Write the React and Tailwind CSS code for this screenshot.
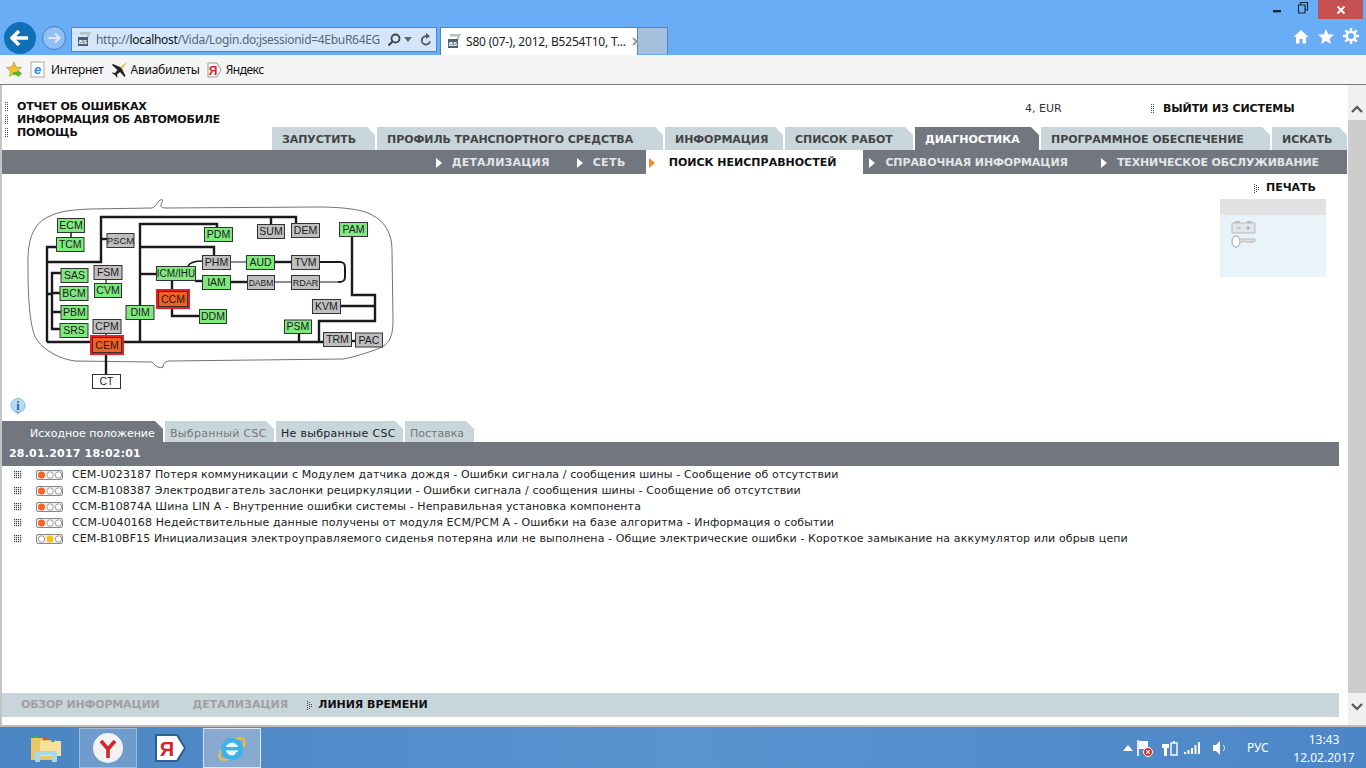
import React from 'react';

const VERD = 'font-["DejaVu_Sans",sans-serif]';
const SEGOE = 'font-["Noto_Sans",sans-serif]';
const NOTCH = '[clip-path:polygon(0_0,calc(100%-8px)_0,100%_8px,100%_100%,0_100%)]';

function Dots({ className = '' }) {
  return (
    <svg width="4" height="9" viewBox="0 0 4 9" className={className} fill="#555">
      {[0, 2, 4, 6, 8].map((y) => (
        <g key={y}><rect x="0" y={y} width="1" height="1" /><rect x="2" y={y} width="1" height="1" /></g>
      ))}
    </svg>
  );
}

function Grid() {
  const pts = [0, 2, 4, 6];
  return (
    <svg width="8" height="8" viewBox="0 0 8 8" fill="#444" className="shrink-0">
      {pts.map((y) => pts.map((x) => <rect key={x + '-' + y} x={x} y={y} width="1.2" height="1.2" />))}
    </svg>
  );
}

function Arrow({ color = '#fff' }) {
  return <svg width="6" height="10" viewBox="0 0 6 10" className="shrink-0"><path d="M0 0L6 5L0 10Z" fill={color} /></svg>;
}

function DotArrow() {
  return (
    <svg width="6" height="9" viewBox="0 0 6 9" fill="#444" className="shrink-0">
      <rect x="0" y="0" width="1" height="1" /><rect x="0" y="2" width="1" height="1" /><rect x="0" y="4" width="1" height="1" /><rect x="0" y="6" width="1" height="1" /><rect x="0" y="8" width="1" height="1" />
      <rect x="2" y="1" width="1" height="1" /><rect x="2" y="3" width="1" height="1" /><rect x="2" y="5" width="1" height="1" /><rect x="2" y="7" width="1" height="1" />
      <rect x="4" y="3" width="1" height="1" /><rect x="4" y="5" width="1" height="1" />
    </svg>
  );
}

function Lamp({ active, color }) {
  const cx = [5.5, 14, 22.5];
  return (
    <svg width="27" height="10" viewBox="0 0 27 10" className="shrink-0">
      <rect x="0.5" y="0.5" width="26" height="9" rx="1.5" fill="#f0f0f0" stroke="#888" />
      {cx.map((x, i) => (
        <circle key={x} cx={x} cy="5" r="3.2" fill={i === active ? color : '#fff'} stroke={i === active ? color : '#888'} strokeWidth="0.8" />
      ))}
    </svg>
  );
}

function AsIcon() {
  return (
    <svg width="15" height="17" viewBox="0 0 15 17" className="shrink-0">
      <path d="M3 1H14L10 10H8L10.5 3.5H3Z" fill="#b8c0c8" />
      <rect x="1" y="6" width="10" height="9" fill="#4f6272" />
      <text x="6" y="13" textAnchor="middle" fontSize="7.5" fontWeight="700" fill="#fff" fontFamily="Liberation Sans">as</text>
    </svg>
  );
}

function IeLogo({ size = 18 }) {
  return (
    <svg width={size} height={size} viewBox="0 0 32 32" className="shrink-0">
      <ellipse cx="16" cy="17" rx="15" ry="7" fill="none" stroke="#f2c230" strokeWidth="2" transform="rotate(-38 16 17)" />
      <circle cx="16" cy="17" r="11" fill="#3db2ea" />
      <circle cx="16" cy="17" r="6.4" fill="#e8f8ff" />
      <rect x="8" y="15" width="17" height="3.4" fill="#3db2ea" />
      <path d="M20 20h7c-1 4-5 7-10 7-2 0-3-1-4-2 3 1 6-1 7-5z" fill="#3db2ea" />
    </svg>
  );
}

const nodes = [
  ['ECM', 57.5, 218.5, 27, 14, 'g'], ['TCM', 56.5, 237.5, 27.5, 14, 'g'], ['PSCM', 107, 233.5, 27, 14, 'x', 9.5],
  ['SAS', 61, 268.5, 27, 14, 'g'], ['BCM', 60, 286.5, 28, 14, 'g'], ['PBM', 61, 305.5, 27, 14, 'g'], ['SRS', 60, 323.5, 28, 14, 'g'],
  ['FSM', 94, 265.5, 28, 14, 'x'], ['CVM', 94.5, 283.5, 27, 14, 'g'], ['CPM', 93, 319.5, 28, 14, 'x'],
  ['CEM', 92.5, 337.5, 29, 15, 'r'], ['CT', 92.5, 374.5, 28, 14, 'w'], ['DIM', 126, 305.5, 28, 14, 'g'],
  ['ICM/IHU', 156.5, 266.5, 39, 14, 'g', 10], ['CCM', 158.5, 291.5, 29, 15, 'r'], ['PDM', 204.5, 227.5, 28, 14, 'g'],
  ['SUM', 257.5, 224.5, 27, 14, 'x'], ['DEM', 291.5, 223.5, 28, 14, 'x'], ['PAM', 339.5, 222.5, 28, 14, 'g'],
  ['PHM', 202.5, 255.5, 28, 14, 'x'], ['AUD', 246.5, 255.5, 28, 14, 'g'], ['TVM', 291.5, 255.5, 28, 14, 'x'],
  ['IAM', 202.5, 275.5, 28, 14, 'g'], ['DABM', 247.5, 275.5, 27, 14, 'x', 8.5], ['RDAR', 291.5, 275.5, 28, 14, 'x', 9],
  ['KVM', 312.5, 299.5, 28, 14, 'x'], ['DDM', 199.5, 309.5, 27, 14, 'g'], ['PSM', 284.5, 320, 27, 13.5, 'g'],
  ['TRM', 323.5, 332.5, 28, 14, 'x'], ['PAC', 355.5, 333, 27, 14, 'x'],
];
const fills = { g: '#7fe87f', x: '#bfbfbf', r: '#f2601f', w: '#ffffff' };

function Diagram() {
  return (
    <svg width="380" height="200" viewBox="20 195 380 200" className="block shrink-0">
      <path d="M28 268C27 240 33 224 48 217C60 211 70 210 90 209L152 208C157 206 157 203 159 201C161 199 164 199 162 202C160 206 160 208 166 208L317 207C340 207 362 209 372 215C386 222 392 235 392 250L393 320C393 340 388 345 375 350C360 355 350 358 343 359L170 361C165 361 163 364 163 367C160 369 155 366 152 362L75 361C60 359 45 351 37 340C30 330 28 300 28 268Z" fill="#fff" stroke="#333" strokeWidth="0.7" />
      <g stroke="#1a1a1a" strokeWidth="2.4" fill="none">
        <path d="M47 342H324" />
        <path d="M47 342V247H56" />
        <path d="M47 262H101V217H296V224" />
        <path d="M271 217V224" />
        <path d="M101 239H107" />
        <path d="M71 232V238" strokeWidth="1.5" />
        <path d="M61 273H52V329H60" />
        <path d="M52 293H60M52 312H61M47 294H52" />
        <path d="M140 342V224H217V228" />
        <path d="M140 247H214V256" />
        <path d="M140 274H156" />
        <path d="M172 280V291" />
        <path d="M172 306V316H200" />
        <path d="M188 266C190 262 195 261 203 261" strokeWidth="1.6" />
        <path d="M195 281H203" />
        <path d="M274 262H292" />
        <path d="M230 262H247" strokeWidth="1" />
        <path d="M319 262H340C344 262 345 264 345 268V277C345 281 343 282 338 282" strokeWidth="2" />
        <path d="M320 282H338" strokeWidth="1" />
        <path d="M230 282H248" />
        <path d="M274 282H292" strokeWidth="1" />
        <path d="M352 236V295H375V321H319V342" />
        <path d="M340 306H375" />
        <path d="M299 333V342" />
        <path d="M352 341H356" />
        <path d="M106 352V375" />
        <path d="M106 333V338" strokeWidth="1.4" />
        <path d="M106 279V284" strokeWidth="1.2" />
      </g>
      {nodes.map(([t, x, y, w, h, k, fs]) => (
        <g key={t}>
          {k === 'r' && <rect x={x - 1.5} y={y - 1.5} width={w + 3} height={h + 3} fill="none" stroke="#ee1c25" strokeWidth="2" />}
          <rect x={x} y={y} width={w} height={h} fill={fills[k]} stroke="#333" strokeWidth="1" />
          <text x={x + w / 2} y={y + h / 2 + 3.6} textAnchor="middle" fontSize={fs || 10.5} fontFamily="Liberation Sans" fill="#1c1c1c">{t}</text>
        </g>
      ))}
    </svg>
  );
}

const topTabs = [
  ['ЗАПУСТИТЬ', 'w-[103px]'], ['ПРОФИЛЬ ТРАНСПОРТНОГО СРЕДСТВА', 'w-[286px]'], ['ИНФОРМАЦИЯ', 'w-[118px]'],
  ['СПИСОК РАБОТ', 'w-[128px]'], ['ДИАГНОСТИКА', 'w-[124px]', true], ['ПРОГРАММНОЕ ОБЕСПЕЧЕНИЕ', 'w-[229px]'], ['ИСКАТЬ', 'w-[75px]'],
];
const rows = [
  ['CEM-U023187 Потеря коммуникации с Модулем датчика дождя - Ошибки сигнала / сообщения шины - Сообщение об отсутствии', 0, '#f26522'],
  ['CCM-B108387 Электродвигатель заслонки рециркуляции - Ошибки сигнала / сообщения шины - Сообщение об отсутствии', 0, '#f26522'],
  ['CCM-B10874A Шина LIN A - Внутренние ошибки системы - Неправильная установка компонента', 0, '#f26522'],
  ['CCM-U040168 Недействительные данные получены от модуля ECM/PCM A - Ошибки на базе алгоритма - Информация о событии', 0, '#f26522'],
  ['CEM-B10BF15 Инициализация электроуправляемого сиденья потеряна или не выполнена - Общие электрические ошибки - Короткое замыкание на аккумулятор или обрыв цепи', 1, '#f7c600'],
];

function Chrome() {
  return (
    <div className="h-[55px] bg-[#69adf6] shrink-0 flex flex-col">
      <div className="h-[19px] flex justify-end items-start">
        <svg width="10" height="19" viewBox="0 0 10 19" className="mr-[15px]"><rect x="1" y="10" width="8" height="2.4" fill="#1b2a3a" /></svg>
        <svg width="12" height="19" viewBox="0 0 12 19" className="mr-[9px]"><path d="M3.5 5V2.5H10.5V10H8M1.5 5H8V13H1.5Z" fill="none" stroke="#1b2a3a" strokeWidth="1.2" /></svg>
        <div className="w-[45px] h-[19px] bg-[#c75050] flex items-center justify-center mr-[3px]">
          <svg width="10" height="10" viewBox="0 0 10 10"><path d="M1.5 1.5L8.5 8.5M8.5 1.5L1.5 8.5" stroke="#fff" strokeWidth="1.8" /></svg>
        </div>
      </div>
      <div className="flex-1 flex items-start pl-[4px]">
        <div className="w-[32px] h-[32px] mt-[3px] rounded-full bg-[#0f70b7] flex items-center justify-center shrink-0">
          <svg width="20" height="18" viewBox="0 0 20 18"><path d="M9 2L2 9L9 16M2.5 9H18" fill="none" stroke="#fff" strokeWidth="3.4" /></svg>
        </div>
        <div className="w-[24px] h-[24px] mt-[7px] ml-[6px] rounded-full border border-[#3b7fc0] bg-[#8fc1f4] flex items-center justify-center shrink-0">
          <svg width="14" height="12" viewBox="0 0 14 12"><path d="M8 1.5L12.5 6L8 10.5M12 6H1.5" fill="none" stroke="#dfe9f3" strokeWidth="2" /></svg>
        </div>
        <div className="w-[366px] h-[25px] mt-[8px] ml-[5px] bg-[#d3e6fb] border border-[#4a87c9] flex items-center pl-[5px] shrink-0">
          <AsIcon />
          <span className={`ml-[4px] w-[286px] text-[12px] text-[#5a6672] whitespace-nowrap ${SEGOE} tracking-[-0.3px]`}>http://<span className="text-[#111]">localhost</span>/Vida/Login.do;jsessionid=4EbuR64EG</span>
          <svg width="14" height="14" viewBox="0 0 14 14" className="ml-[5px] shrink-0"><circle cx="8.5" cy="5.5" r="4" fill="none" stroke="#444" strokeWidth="1.8" /><path d="M5.5 8.5L1.5 12.5" stroke="#444" strokeWidth="2" /></svg>
          <svg width="8" height="5" viewBox="0 0 8 5" className="ml-[3px] shrink-0"><path d="M0 0H8L4 5Z" fill="#666" /></svg>
          <svg width="12" height="14" viewBox="0 0 12 14" className="ml-[8px] shrink-0"><path d="M10 8.5A4.2 4.2 0 1 1 7 3.2" fill="none" stroke="#555" strokeWidth="1.8" /><path d="M6 0L10 3.2L6 6Z" fill="#555" /></svg>
        </div>
        <div className="w-[198px] h-[28px] mt-[8px] ml-[3px] bg-white border border-b-0 border-[#4a87c9] flex items-center pl-[6px] shrink-0">
          <AsIcon />
          <span className={`ml-[4px] text-[12px] text-[#222] whitespace-nowrap tracking-[-0.2px] ${SEGOE}`}>S80 (07-), 2012, B5254T10, T...</span>
          <svg width="9" height="9" viewBox="0 0 9 9" className="ml-[6px] shrink-0"><path d="M1 1L8 8M8 1L1 8" stroke="#999" strokeWidth="1.8" /></svg>
        </div>
        <div className="w-[30px] h-[27px] mt-[8px] bg-[#a5bfdc] border-t border-r border-[#4a87c9] shrink-0" />
        <div className="ml-auto mt-[9px] flex items-center gap-[9px] pr-[7px]">
          <svg width="16" height="15" viewBox="0 0 16 15"><path d="M8 1L15.5 8H13V14.5H9.5V10H6.5V14.5H3V8H.5Z" fill="#fff" /></svg>
          <svg width="16" height="15" viewBox="0 0 16 15"><path d="M8 0L10.2 5.2L16 5.7L11.6 9.4L13 15L8 12L3 15L4.4 9.4L0 5.7L5.8 5.2Z" fill="#fff" /></svg>
          <svg width="16" height="16" viewBox="0 0 16 16"><circle cx="8" cy="8" r="4.2" fill="none" stroke="#fff" strokeWidth="2.4" /><g stroke="#fff" strokeWidth="2.4"><path d="M8 0V3M8 13V16M0 8H3M13 8H16M2.3 2.3L4.4 4.4M11.6 11.6L13.7 13.7M13.7 2.3L11.6 4.4M4.4 11.6L2.3 13.7" /></g></svg>
        </div>
      </div>
    </div>
  );
}

function Favs() {
  return (
    <div className={`h-[30px] bg-[#f5f5f5] border-b border-[#7a7a7a] shrink-0 flex items-center pl-[6px] text-[12px] text-[#111] ${SEGOE} tracking-[-0.35px]`}>
      <svg width="16" height="16" viewBox="0 0 16 16"><path d="M8 0L10 5L15.5 5.5L11.3 9L12.6 14.5L8 11.5L3.4 14.5L4.7 9L.5 5.5L6 5Z" fill="#f4c430" stroke="#a8841c" strokeWidth=".6" /><path d="M7 10H12V8L16 11.5L12 15V13H7Z" fill="#5cb531" /></svg>
      <span className="ml-[8px]"><svg width="15" height="17" viewBox="0 0 15 17"><rect x="1" y="1" width="13" height="15" fill="#fff" stroke="#aaa" /><text x="7.5" y="13" textAnchor="middle" fontSize="13" fontWeight="700" fontStyle="italic" fill="#2b8de0" fontFamily="Liberation Sans">e</text></svg></span>
      <span className="ml-[6px]">Интернет</span>
      <svg width="16" height="16" viewBox="0 0 16 16" className="ml-[8px]"><path d="M15 1L10 5.5L2 2L1 3L6.5 8L4 11L1.5 10.5L1 11.2L4 13L5.8 15.5L6.5 15L6 12.5L9 10L13.5 15L14.5 14L10.8 6.5Z" fill="#222" /><path d="M15 1L10 5.5L11 6.5Z" fill="#f2c230" stroke="#f2c230" /></svg>
      <span className="ml-[3px] tracking-[-0.22px]">Авиабилеты</span>
      <svg width="15" height="16" viewBox="0 0 15 16" className="ml-[7px]"><path d="M1 1H10L14 8L10 15H1Z" fill="#fff" stroke="#999" /><text x="6" y="12.5" textAnchor="middle" fontSize="12" fontWeight="700" fill="#d8232a" fontFamily="Liberation Sans">Я</text></svg>
      <span className="ml-[4px] tracking-[-0.5px]">Яндекс</span>
    </div>
  );
}

function Scrollbar() {
  return (
    <div className="w-[18px] shrink-0 flex flex-col bg-[#f0f0f0]">
      <div className="h-[35px] flex items-center justify-center pt-[12px]">
        <svg width="12" height="8" viewBox="0 0 12 8"><path d="M1 7L6 2L11 7" fill="none" stroke="#555" strokeWidth="2.2" /></svg>
      </div>
      <div className="flex-1 bg-[#cdcdcd]" />
      <div className="h-[32px] flex items-center justify-center pb-[4px]">
        <svg width="12" height="8" viewBox="0 0 12 8"><path d="M1 1L6 6L11 1" fill="none" stroke="#555" strokeWidth="2.2" /></svg>
      </div>
    </div>
  );
}

export default function App() {
  return (
    <div className="w-[1366px] h-[768px] overflow-hidden flex flex-col bg-white">
      <Chrome />
      <Favs />
      <div className="flex-1 min-h-0 flex">
        <div className={`flex-1 min-w-0 border-l-2 border-[#c4c4c4] bg-white flex flex-col ${VERD}`}>
          <header className="h-[65px] shrink-0 flex text-[11px] font-bold text-[#111]">
            <div className="w-[270px] shrink-0 pt-[15px] pl-[3px] flex flex-col tracking-[-0.2px]">
              {['ОТЧЕТ ОБ ОШИБКАХ', 'ИНФОРМАЦИЯ ОБ АВТОМОБИЛЕ', 'ПОМОЩЬ'].map((t) => (
                <div key={t} className="h-[13px] flex items-center gap-[8px] whitespace-nowrap leading-none"><Dots />{t}</div>
              ))}
            </div>
            <div className="flex-1 flex flex-col justify-between">
              <div className="flex pt-[17px] leading-none">
                <span className="ml-[753px] w-[38px] pt-[1px] font-normal text-[#333] whitespace-nowrap">4, EUR</span>
                <span className="ml-[88px] flex items-center gap-[8px] h-[13px] whitespace-nowrap tracking-[-0.1px]"><Dots />ВЫЙТИ ИЗ СИСТЕМЫ</span>
              </div>
              <div className="h-[23px] flex gap-[2px] tracking-[-0.07px]">
                {topTabs.map(([t, w, on]) => (
                  <div key={t} className={`${w} ${NOTCH} shrink-0 h-[23px] flex items-center pl-[10px] pt-[4px] whitespace-nowrap ${on ? 'bg-[#72767f] text-white' : 'bg-[#c8d6dc] text-[#444]'}`}>{t}</div>
                ))}
              </div>
            </div>
          </header>
          <nav className="h-[24px] mr-[1px] shrink-0 bg-[#72767f] flex justify-end items-stretch pr-[28px] text-[11px] font-bold text-[#e4e6e8] whitespace-nowrap">
            <div className="flex items-center gap-[10px] pt-[2px] tracking-[0.18px]"><Arrow />ДЕТАЛИЗАЦИЯ</div>
            <div className="flex items-center gap-[10px] pt-[2px] ml-[27px] tracking-[0.4px]"><Arrow />СЕТЬ</div>
            <div className="flex items-center gap-[14px] pt-[2px] ml-[20px] bg-white pr-[27px] pl-[3px] text-[#111]"><Arrow color="#f28c28" />ПОИСК НЕИСПРАВНОСТЕЙ</div>
            <div className="flex items-center gap-[10px] pt-[2px] ml-[6px] tracking-[-0.1px]"><Arrow />СПРАВОЧНАЯ ИНФОРМАЦИЯ</div>
            <div className="flex items-center gap-[10px] pt-[2px] ml-[33px] tracking-[-0.12px]"><Arrow />ТЕХНИЧЕСКОЕ ОБСЛУЖИВАНИЕ</div>
          </nav>
          <section className="h-[247px] shrink-0 flex items-start">
            <div className="pt-[21px] pl-[18px] flex flex-col">
              <Diagram />
              <svg width="16" height="17" viewBox="0 0 16 17" className="-ml-[10px] mt-[3px]">
                <circle cx="8" cy="7.5" r="7" fill="#b9d9f2" stroke="#8fb8dc" /><path d="M5 13L8 17L10 13Z" fill="#8fb8dc" />
                <text x="8" y="12" textAnchor="middle" fontSize="12" fontWeight="700" fill="#1f5fa8" fontFamily="Liberation Serif">i</text>
              </svg>
            </div>
            <div className="ml-auto mr-[22px] w-[106px] flex flex-col items-stretch">
              <div className="h-[25px] flex items-center justify-end gap-[6px] pt-[4px] pr-[10px] text-[11px] font-bold text-[#111] whitespace-nowrap"><DotArrow />ПЕЧАТЬ</div>
              <div className="h-[16px] bg-[#e2e2e2]" />
              <div className="h-[62px] bg-[#e8f4fa] pl-[11px] pt-[5px]">
                <svg width="25" height="14" viewBox="0 0 25 14" className="block"><path d="M1 3H24V13H1Z" fill="#e0e6ea" stroke="#bbb" /><path d="M4 1H9V3H4ZM16 1H21V3H16Z" fill="#bbb" /><path d="M6 8H10M15 8H19M17 6V10" stroke="#aaa" /></svg>
                <svg width="25" height="13" viewBox="0 0 25 13" className="block mt-[1px]"><ellipse cx="5" cy="6.5" rx="4" ry="5.5" fill="#fff" stroke="#bbb" strokeWidth="1.5" /><path d="M9 4H24V6.5H22L21 8L20 6.5L18.5 8L17 6.5L15.5 8L14 6.5H9" fill="#ddd" stroke="#bbb" /></svg>
              </div>
            </div>
          </section>
          <div className="h-[21px] shrink-0 flex gap-[2px] text-[11px] whitespace-nowrap">
            <div className={`w-[161px] ${NOTCH} bg-[#72767f] text-white flex items-center pl-[28px] pt-[5px]`}>Исходное положение</div>
            <div className={`w-[109px] ${NOTCH} bg-[#c8d6dc] text-[#777] flex items-center pl-[5px] pt-[5px] tracking-[0.3px]`}>Выбранный CSC</div>
            <div className={`w-[127px] ${NOTCH} bg-[#c8d6dc] text-[#222] flex items-center pl-[5px] pt-[5px] tracking-[0.3px]`}>Не выбранные CSC</div>
            <div className={`w-[69px] ${NOTCH} bg-[#c8d6dc] text-[#777] flex items-center pl-[5px] pt-[5px]`}>Поставка</div>
          </div>
          <div className="h-[24px] shrink-0 mr-[9px] bg-[#72767f] flex items-center pl-[7px] text-[11px] font-bold text-white tracking-[0.2px]">28.01.2017 18:02:01</div>
          <ul className="flex-1 pt-[1px] text-[11px] text-[#222] tracking-[0.11px]">
            {rows.map(([t, a, c]) => (
              <li key={t} className="h-[16px] flex items-center pl-[12px] whitespace-nowrap">
                <Grid />
                <span className="ml-[14px]"><Lamp active={a} color={c} /></span>
                <span className="ml-[9px]">{t}</span>
              </li>
            ))}
          </ul>
          <div className="h-[24px] shrink-0 mr-[9px] bg-[#c8d6dc] flex items-center pl-[19px] text-[11px] font-bold text-[#a0a0a0] whitespace-nowrap">
            <span className="tracking-[-0.2px]">ОБЗОР ИНФОРМАЦИИ</span>
            <span className="ml-[33px]">ДЕТАЛИЗАЦИЯ</span>
            <span className="ml-[19px] flex items-center gap-[5px] text-[#111] tracking-[-0.05px]"><DotArrow />ЛИНИЯ ВРЕМЕНИ</span>
          </div>
          <div className="h-[8px] shrink-0" />
        </div>
        <Scrollbar />
      </div>
      <footer className="h-[43px] shrink-0 border-t-2 border-[#bdbdbd] bg-gradient-to-r from-[#4a85c4] via-[#5a93d0] to-[#4b86c6] flex items-stretch text-white">
        <div className="ml-[30px] w-[32px] flex items-center">
          <svg width="32" height="28" viewBox="0 0 32 28"><path d="M1 4H13L15 6H26V26H1Z" fill="#e9c766" /><path d="M10 7H31V22H10Z" fill="#f6e29a" /><rect x="4" y="2" width="4" height="2" fill="#3ab54a" /><rect x="13" y="4" width="4" height="2" fill="#d64a3a" /><rect x="21" y="6" width="4" height="2" fill="#3aa0e0" /><path d="M5 17H27V28H22V21H10V28H5Z" fill="#a5d8ee" /></svg>
        </div>
        <div className="ml-[17px] w-[58px] mt-[1px] bg-[#6f9ccc] border border-[#9dbbdb] flex items-center justify-center">
          <svg width="30" height="30" viewBox="0 0 30 30"><circle cx="15" cy="15" r="15" fill="#f2f2f2" /><path d="M8 8L15 16L22 8M15 16V25" fill="none" stroke="#d8232a" strokeWidth="3.6" /></svg>
        </div>
        <div className="w-[66px] flex items-center justify-center">
          <svg width="31" height="30" viewBox="0 0 31 30"><path d="M1 2H22L30 15L22 28H1Z" fill="#fff" stroke="#2f5f90" strokeWidth="2" /><text x="12" y="23" textAnchor="middle" fontSize="20" fill="#d8232a" fontWeight="700" fontFamily="Liberation Sans">Я</text></svg>
        </div>
        <div className="w-[58px] mt-[1px] bg-[#88a9d0] border border-[#dbe6f2] flex items-center justify-center"><IeLogo size={32} /></div>
        <div className={`ml-auto flex items-center ${SEGOE}`}>
          <svg width="10" height="6" viewBox="0 0 10 6"><path d="M0 6L5 0L10 6Z" fill="#fff" /></svg>
          <svg width="18" height="18" viewBox="0 0 18 18" className="ml-[3px]"><path d="M2 1V17" stroke="#fff" strokeWidth="1.6" /><path d="M3 2H12V10H3Z" fill="#fff" /><circle cx="12" cy="13" r="4.5" fill="#e02c2c" stroke="#fff" /><path d="M10.2 11.2L13.8 14.8M13.8 11.2L10.2 14.8" stroke="#fff" strokeWidth="1.2" /></svg>
          <svg width="16" height="16" viewBox="0 0 16 16" className="ml-[8px]"><path d="M2 0V4M5 0V4M0 4H7V8H5V16H2V8H0Z" fill="#fff" /><rect x="9" y="3" width="6" height="12" fill="none" stroke="#fff" strokeWidth="1.4" /><rect x="11" y="1" width="2" height="2" fill="#fff" /></svg>
          <svg width="16" height="12" viewBox="0 0 16 12" className="ml-[6px]"><path d="M0 10h2v2H0zM3.5 8h2v4h-2zM7 6h2v6H7zM10.5 3h2v9h-2zM14 0h2v12h-2z" fill="#fff" /></svg>
          <svg width="13" height="14" viewBox="0 0 13 14" className="ml-[13px]"><path d="M0 4H3L7 0V14L3 10H0Z" fill="#fff" /><path d="M10 4C12 6 12 8 10 10" fill="none" stroke="#fff" strokeWidth="1" /></svg>
          <span className="ml-[21px] text-[12px] w-[22px] whitespace-nowrap pt-[1px]">РУС</span>
          <div className="ml-[16px] w-[78px] mr-[3px] mt-[3px] text-center text-[12px] leading-[18px] whitespace-nowrap">
            <div>13:43</div><div>12.02.2017</div>
          </div>
        </div>
      </footer>
    </div>
  );
}
